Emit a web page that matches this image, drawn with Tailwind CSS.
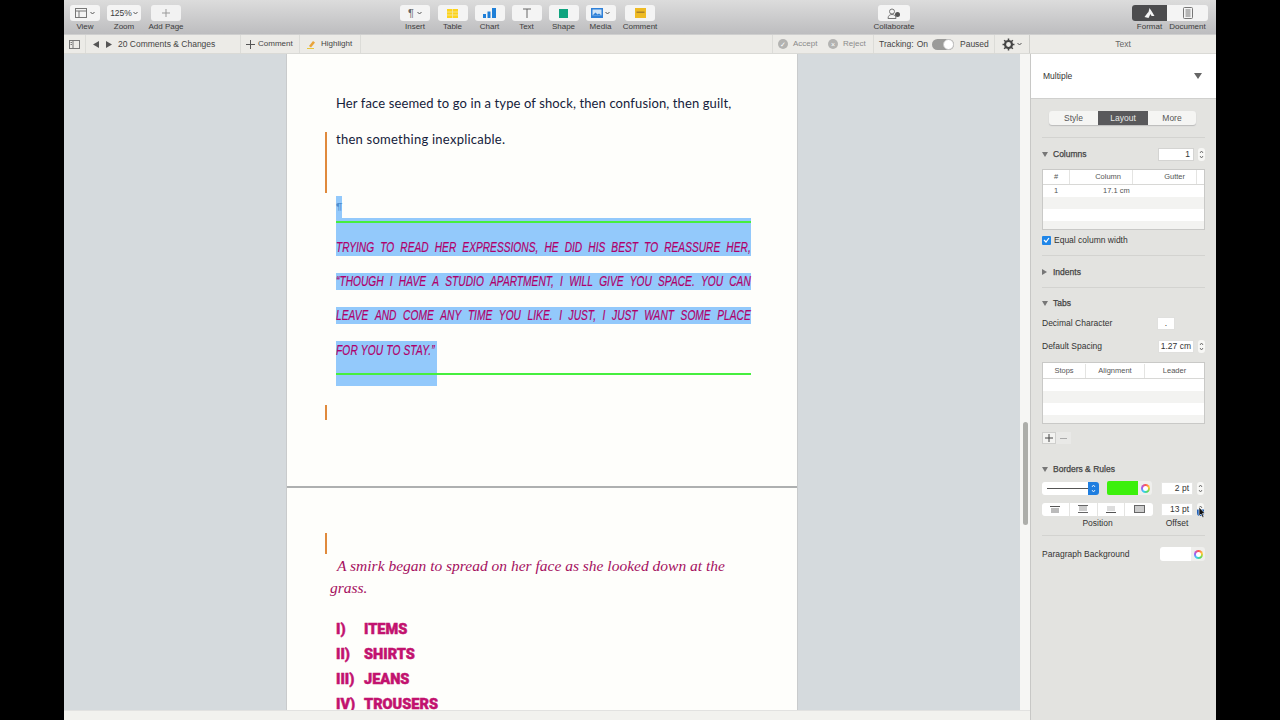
<!DOCTYPE html>
<html lang="en">
<head>
<meta charset="UTF-8">
<title>Pages</title>
<script src="https://cdn.jsdelivr.net/npm/@tailwindcss/browser@4"></script>
</head>
<body class="bg-black overflow-hidden font-['Liberation_Sans',sans-serif]">
<div class="w-[1280px] h-[720px] px-[64px]">
<div class="w-[1152px] h-[720px] flex flex-col bg-[#d5dadd] text-[#3a3a3a] overflow-hidden">

  <!-- top toolbar -->
  <div class="h-[34px] shrink-0 relative bg-gradient-to-b from-[#dcdcdc] to-[#bdbdbf] text-[8px] text-[#3c3c3c]">
    <div class="flex h-full">
      <div class="w-[42px] flex flex-col items-center pt-[5px]">
        <div class="w-[30px] h-[16px] rounded-[3px] bg-[#f4f4f4] flex items-center justify-center gap-[3px]">
          <svg width="12" height="10" viewBox="0 0 12 10" fill="none" stroke="#777"><rect x="0.5" y="0.5" width="11" height="9"/><path d="M0.5 3h11M4 3v6.5"/></svg>
          <svg width="5" height="4" viewBox="0 0 5 4" fill="none" stroke="#555"><path d="M0.5 1l2 2 2-2"/></svg>
        </div>
        <span class="mt-[1px] leading-[10px]">View</span>
      </div>
      <div class="w-[36px] flex flex-col items-center pt-[5px]">
        <div class="w-[34px] h-[16px] rounded-[3px] bg-[#f4f4f4] flex items-center justify-center gap-[1px] text-[8.5px]">125%<svg width="5" height="4" viewBox="0 0 5 4" fill="none" stroke="#555"><path d="M0.5 1l2 2 2-2"/></svg></div>
        <span class="mt-[1px] leading-[10px]">Zoom</span>
      </div>
      <div class="w-[46px] ml-[1px] flex flex-col items-center pt-[5px]">
        <div class="w-[30px] h-[16px] rounded-[3px] bg-[#f2f2f2] flex items-center justify-center text-[#999]">
          <svg width="10" height="10" viewBox="0 0 10 10" stroke="#999"><path d="M5 1v8M1 5h8"/></svg>
        </div>
        <span class="mt-[1px] leading-[10px]">Add Page</span>
      </div>

      <div class="flex ml-[207px]">
        <div class="w-[38px] flex flex-col items-center pt-[5px]">
          <div class="w-[30px] h-[16px] rounded-[3px] bg-[#f4f4f4] flex items-center justify-center gap-[3px] text-[#666] text-[11px] leading-none">¶<svg width="5" height="4" viewBox="0 0 5 4" fill="none" stroke="#555"><path d="M0.5 1l2 2 2-2"/></svg></div>
          <span class="mt-[1px] leading-[10px]">Insert</span>
        </div>
        <div class="w-[37px] flex flex-col items-center pt-[5px]">
          <div class="w-[30px] h-[16px] rounded-[3px] bg-[#f4f4f4] flex items-center justify-center">
            <svg width="11" height="9" viewBox="0 0 11 9"><rect width="11" height="9" fill="#fdd31c"/><path d="M0 3h11M0 6h11M5.5 0v9" stroke="#f3e9a8" stroke-width="0.8"/></svg>
          </div>
          <span class="mt-[1px] leading-[10px]">Table</span>
        </div>
        <div class="w-[37px] flex flex-col items-center pt-[5px]">
          <div class="w-[30px] h-[16px] rounded-[3px] bg-[#f4f4f4] flex items-center justify-center">
            <svg width="13" height="10" viewBox="0 0 13 10" fill="#1e7fd8"><rect y="6" width="3" height="4"/><rect x="4.5" y="3.5" width="3" height="6.5"/><rect x="9" y="0" width="4" height="10"/></svg>
          </div>
          <span class="mt-[1px] leading-[10px]">Chart</span>
        </div>
        <div class="w-[37px] flex flex-col items-center pt-[5px]">
          <div class="w-[30px] h-[16px] rounded-[3px] bg-[#f4f4f4] flex items-center justify-center">
            <svg width="10" height="10" viewBox="0 0 10 10" fill="none" stroke="#666"><path d="M1 1h8M5 1v9"/></svg>
          </div>
          <span class="mt-[1px] leading-[10px]">Text</span>
        </div>
        <div class="w-[37px] flex flex-col items-center pt-[5px]">
          <div class="w-[30px] h-[16px] rounded-[3px] bg-[#f4f4f4] flex items-center justify-center">
            <div class="w-[9px] h-[9px] bg-[#0fa47f]"></div>
          </div>
          <span class="mt-[1px] leading-[10px]">Shape</span>
        </div>
        <div class="w-[37px] flex flex-col items-center pt-[5px]">
          <div class="w-[30px] h-[16px] rounded-[3px] bg-[#f4f4f4] flex items-center justify-center gap-[2px]">
            <svg width="12" height="10" viewBox="0 0 12 10"><rect width="12" height="10" fill="#2f80d8"/><rect x="1.5" y="1.5" width="9" height="6" fill="#cfe3f6"/><path d="M1.5 7.5l3-3 2 2 1.5-1 2.5 2z" fill="#2f80d8"/></svg>
            <svg width="5" height="4" viewBox="0 0 5 4" fill="none" stroke="#555"><path d="M0.5 1l2 2 2-2"/></svg>
          </div>
          <span class="mt-[1px] leading-[10px]">Media</span>
        </div>
        <div class="w-[42px] flex flex-col items-center pt-[5px]">
          <div class="w-[30px] h-[16px] rounded-[3px] bg-[#f4f4f4] flex items-center justify-center">
            <svg width="11" height="10" viewBox="0 0 11 10"><rect width="11" height="10" fill="#eeba24"/><rect x="1.5" y="3.5" width="8" height="1.5" fill="#a8822a"/></svg>
          </div>
          <span class="mt-[1px] leading-[10px]">Comment</span>
        </div>
      </div>

      <div class="ml-[212px] w-[42px] flex flex-col items-center pt-[5px]">
        <div class="w-[32px] h-[16px] rounded-[3px] bg-[#f4f4f4] flex items-center justify-center">
          <svg width="14" height="11" viewBox="0 0 14 11" fill="none" stroke="#777"><circle cx="5" cy="3.5" r="2.5"/><path d="M1 10.5c0-3 2-4 4-4s4 1 4 4z"/><circle cx="10.5" cy="6.5" r="2.5" fill="#555" stroke="none"/></svg>
        </div>
        <span class="mt-[1px] leading-[10px]">Collaborate</span>
      </div>

      <div class="ml-[217px] flex flex-col pt-[5px]">
        <div class="flex w-[76px] h-[16px] rounded-[3px] overflow-hidden bg-[#f4f4f4]">
          <div class="w-[35px] bg-[#4c4c4e] flex items-center justify-center">
            <svg width="11" height="10" viewBox="0 0 11 10" fill="#f4f4f4"><path d="M5.5 0l2 3 3 5h-3l-1-2-2 4-4-1 3-4 1-1z"/></svg>
          </div>
          <div class="flex-1 flex items-center justify-center">
            <svg width="10" height="12" viewBox="0 0 10 12" fill="none" stroke="#777"><rect x="0.5" y="0.5" width="9" height="11" rx="1"/><path d="M2.5 3h5M2.5 5h5M2.5 7h5M2.5 9h5"/></svg>
          </div>
        </div>
        <div class="flex mt-[1px] leading-[10px] w-[76px]">
          <span class="w-[35px] text-center">Format</span>
          <span class="w-[41px] text-center whitespace-nowrap">Document</span>
        </div>
      </div>
    </div>
  </div>

  <!-- second bar -->
  <div class="h-[20px] shrink-0 flex items-center bg-[#ecebe7] text-[8px] text-[#444] border-t border-[#cfcfcf] border-b border-b-[#dadad6]">
    <div class="w-[966px] shrink-0 h-full flex items-center border-r border-[#cfcfcb]">
      <div class="w-[22px] h-full flex items-center justify-center border-r border-[#dcdcd8]">
        <svg width="11" height="9" viewBox="0 0 11 9" fill="none" stroke="#777"><rect x="0.5" y="0.5" width="10" height="8"/><path d="M4 0.5v8M1.5 2.5h1.5M1.5 4.5h1.5"/></svg>
      </div>
      <svg class="ml-[7px]" width="6" height="7" viewBox="0 0 6 7" fill="#555"><path d="M6 0v7L0 3.5z"/></svg>
      <svg class="ml-[7px]" width="6" height="7" viewBox="0 0 6 7" fill="#555"><path d="M0 0v7l6-3.5z"/></svg>
      <span class="ml-[6px] w-[122px] text-[8.5px] whitespace-nowrap">20 Comments &amp; Changes</span>
      <div class="h-full flex items-center w-[60px] border-l border-r border-[#dcdcd8] pl-[5px] gap-[3px]">
        <svg width="9" height="9" viewBox="0 0 9 9" stroke="#555"><path d="M4.5 0v9M0 4.5h9"/></svg>
        <span>Comment</span>
      </div>
      <div class="h-full flex items-center w-[61px] border-r border-[#dcdcd8] pl-[7px] gap-[5px]">
        <svg width="9" height="9" viewBox="0 0 9 9"><path d="M2 6l4-5 2 1.5-4 5z" fill="#e8a33a"/><path d="M0 8.5h7" stroke="#e8c63a"/></svg>
        <span>Highlight</span>
      </div>
      <div class="ml-[411px] h-full w-[1px] bg-[#dcdcd8]"></div>
      <div class="ml-[5px] w-[10px] h-[10px] rounded-full bg-[#b3b3b1] flex items-center justify-center text-white text-[7px] leading-none">✓</div>
      <span class="ml-[5px] w-[25px] text-[#8a8a8a]">Accept</span>
      <div class="ml-[10px] w-[10px] h-[10px] rounded-full bg-[#b3b3b1] flex items-center justify-center text-white text-[7px] leading-none">×</div>
      <span class="ml-[5px] w-[22px] text-[#8a8a8a]">Reject</span>
      <div class="ml-[8px] h-full w-[1px] bg-[#dcdcd8]"></div>
      <span class="ml-[5px] text-[8.5px]">Tracking:</span>
      <span class="ml-[3px] text-[8.5px]">On</span>
      <div class="ml-[4px] w-[22px] h-[11px] rounded-full bg-[#9b9b99] flex justify-end items-center">
        <div class="w-[11px] h-[11px] rounded-full bg-white border border-[#c5c5c5]"></div>
      </div>
      <span class="ml-[6px] text-[8.5px]">Paused</span>
      <div class="ml-[5px] h-full w-[1px] bg-[#dcdcd8]"></div>
      <svg class="ml-[7px]" width="13" height="13" viewBox="0 0 12 12" fill="none" stroke="#444" stroke-width="2"><circle cx="6" cy="6" r="3.2"/><path d="M6 0.5v2M6 9.5v2M0.5 6h2M9.5 6h2M2 2l1.5 1.5M8.5 8.5L10 10M2 10l1.5-1.5M8.5 3.5L10 2" stroke-width="1.4"/></svg>
      <svg class="ml-[2px]" width="5" height="4" viewBox="0 0 5 4" fill="none" stroke="#555"><path d="M0.5 1l2 2 2-2"/></svg>
    </div>
    <span class="flex-1 text-center text-[8.5px] text-[#666]">Text</span>
  </div>

  <div class="flex flex-1 min-h-0">
    <!-- document canvas -->
    <div class="w-[966px] shrink-0 relative overflow-hidden">
      <div class="w-[512px] h-full ml-[222px] bg-[#fefefb] border-x border-[#c9cbcc] relative font-['Lato',sans-serif]">
        <!-- first page -->
        <div class="h-[434px] border-b-2 border-[#aeb0b0] pl-[49px] relative">
          <p class="pt-[31px] text-[13px] leading-[36px] text-[#15213a] tracking-[0.12px] whitespace-nowrap">Her face seemed to go in a type of shock, then confusion, then guilt,</p>
          <p class="text-[13px] leading-[36px] text-[#15213a] tracking-[0.25px] whitespace-nowrap">then something inexplicable.</p>

          <div class="absolute left-[38px] top-[78px] w-[2px] h-[61px] bg-[#e08a3c]"></div>
          <div class="absolute left-[38px] top-[351px] w-[2px] h-[15px] bg-[#e08a3c]"></div>

          <div class="absolute left-[49px] top-[142px] w-[415px]">
            <div class="w-[6px] h-[22px] bg-[#93c9fb] text-[#4d8fd0] text-[9px] leading-[22px]">¶</div>
            <!-- display face squeezed sideways: no condensed family is installed -->
            <div class="font-['Liberation_Sans',sans-serif] italic text-[#b0006b] text-[15px] whitespace-nowrap [-webkit-text-stroke:0.2px_#b0006b]">
              <div class="h-[38px] pt-[21px] leading-[15px] bg-[#93c9fb]"><div class="w-[610px] origin-left scale-x-[0.68] flex justify-between"><span>TRYING</span><span>TO</span><span>READ</span><span>HER</span><span>EXPRESSIONS,</span><span>HE</span><span>DID</span><span>HIS</span><span>BEST</span><span>TO</span><span>REASSURE</span><span>HER,</span></div></div>
              <div class="h-[17px] mt-[17px] leading-[15px] bg-[#93c9fb]"><div class="w-[610px] origin-left scale-x-[0.68] flex justify-between"><span>“THOUGH</span><span>I</span><span>HAVE</span><span>A</span><span>STUDIO</span><span>APARTMENT,</span><span>I</span><span>WILL</span><span>GIVE</span><span>YOU</span><span>SPACE.</span><span>YOU</span><span>CAN</span></div></div>
              <div class="h-[17px] mt-[17px] leading-[15px] bg-[#93c9fb]"><div class="w-[610px] origin-left scale-x-[0.68] flex justify-between"><span>LEAVE</span><span>AND</span><span>COME</span><span>ANY</span><span>TIME</span><span>YOU</span><span>LIKE.</span><span>I</span><span>JUST,</span><span>I</span><span>JUST</span><span>WANT</span><span>SOME</span><span>PLACE</span></div></div>
              <div class="mt-[17px] pt-[1px] leading-[15px] h-[45px] w-[101px] bg-[#93c9fb]"><div class="w-[150px] origin-left scale-x-[0.68] tracking-[0.2px]">FOR YOU TO STAY.”</div></div>
            </div>
            <div class="absolute left-0 right-0 top-[25px] h-[2px] bg-[#46ef3e]"></div>
            <div class="absolute left-0 right-0 top-[177px] h-[2px] bg-[#46ef3e]"></div>
          </div>
        </div>

        <!-- second page -->
        <div class="pl-[43px] relative">
          <div class="absolute left-[38px] top-[45px] w-[2px] h-[21px] bg-[#e08a3c]"></div>
          <p class="pt-[67px] pl-[7px] font-['Liberation_Serif',serif] italic text-[15.5px] leading-[22px] text-[#a5105f] whitespace-nowrap">A smirk began to spread on her face as she looked down at the</p>
          <p class="font-['Liberation_Serif',serif] italic text-[15.5px] leading-[22px] text-[#a5105f]">grass.</p>
          <div class="mt-[18px] pl-[6px] font-['Roboto',sans-serif] font-black text-[14.5px] leading-[25px] text-[#c2126f] [-webkit-text-stroke:0.5px_#c2126f]">
            <div class="flex"><span class="w-[28px]">I)</span><span>ITEMS</span></div>
            <div class="flex"><span class="w-[28px]">II)</span><span>SHIRTS</span></div>
            <div class="flex"><span class="w-[28px]">III)</span><span>JEANS</span></div>
            <div class="flex"><span class="w-[28px]">IV)</span><span>TROUSERS</span></div>
          </div>
        </div>
      </div>

      <!-- scrollbar -->
      <div class="absolute right-0 top-0 bottom-0 w-[10px] bg-[#f6f6f4]"></div>
      <div class="absolute right-[2px] top-[368px] w-[5px] h-[103px] rounded-full bg-[#adaeaa]"></div>
      <!-- bottom scroll track -->
      <div class="absolute left-0 right-0 bottom-0 h-[10px] bg-[#f2f2ee] border-t border-[#e2e2e0]"></div>
    </div>

    <!-- sidebar -->
    <div class="w-[186px] min-w-0 bg-[#e3e3e0] border-l border-[#c8c8c6] text-[8.5px] text-[#333]">
      <div class="h-[45px] bg-white border-b border-[#d0d0ce] flex items-center justify-between pl-[12px] pr-[14px]">
        <span>Multiple</span>
        <svg width="8" height="6" viewBox="0 0 8 6" fill="#666"><path d="M0 0h8L4 6z"/></svg>
      </div>

      <div class="pl-[11px] w-[174px]">
        <div class="mt-[12px] pl-[7px]">
          <div class="flex h-[14px] w-[147px] rounded-[3px] bg-[#f5f5f3] shadow-[0_1px_1px_#bbb] leading-[14px] text-center text-[#555] overflow-hidden">
            <span class="w-[49px]">Style</span>
            <span class="w-[50px] bg-[#59595b] text-[#e8e8e8]">Layout</span>
            <span class="flex-1">More</span>
          </div>
        </div>
        <div class="mt-[12px] border-t border-[#d3d3d0]"></div>

        <div class="flex items-center h-[26px] mt-[3px]">
          <svg width="6" height="5" viewBox="0 0 6 5" fill="#777"><path d="M0 0h6L3 5z"/></svg>
          <span class="ml-[5px] text-[#444] [-webkit-text-stroke:0.25px_#444]">Columns</span>
          <div class="ml-auto w-[36px] h-[13px] bg-white border border-[#d4d4d2] text-right pr-[3px] leading-[11px]">1</div>
          <svg class="ml-[4px]" width="7" height="13" viewBox="0 0 7 13"><rect width="7" height="13" rx="3" fill="#f7f7f5"/><path d="M2 5l1.5-2L5 5M2 8l1.5 2L5 8" fill="none" stroke="#555" stroke-width="0.8"/></svg>
        </div>

        <div class="h-[61px] mt-[2px] border border-[#c9c9c7] bg-white text-[#555] text-[7.5px]">
          <div class="h-[15px] grid grid-cols-[26px_64px_64px_1fr] items-center border-b border-[#d8d8d6] text-center leading-[14px]">
            <span>#</span><span class="border-x border-[#e4e4e2] text-right pr-[11px]">Column</span><span class="border-r border-[#e4e4e2] text-right pr-[11px]">Gutter</span><span></span>
          </div>
          <div class="h-[12px] flex items-center pl-[11px] leading-[12px]"><span class="w-[49px]">1</span><span>17.1 cm</span></div>
          <div class="h-[12px] bg-[#f3f3f1]"></div>
          <div class="h-[12px]"></div>
          <div class="h-[8px] bg-[#f3f3f1]"></div>
        </div>

        <div class="flex items-center mt-[4px] h-[12px]">
          <div class="w-[9px] h-[9px] rounded-[1px] bg-[#1f86e8] flex items-center justify-center">
            <svg width="7" height="6" viewBox="0 0 7 6" fill="none" stroke="#fff" stroke-width="1.2"><path d="M1 3l2 2 3-4"/></svg>
          </div>
          <span class="ml-[3px]">Equal column width</span>
        </div>
        <div class="mt-[9px] border-t border-[#d3d3d0]"></div>

        <div class="flex items-center h-[30px] mt-[1px]">
          <svg width="5" height="6" viewBox="0 0 5 6" fill="#777"><path d="M0 0v6l5-3z"/></svg>
          <span class="ml-[6px] text-[#444] [-webkit-text-stroke:0.25px_#444]">Indents</span>
        </div>
        <div class="border-t border-[#d3d3d0]"></div>

        <div class="flex items-center h-[18px] mt-[6px]">
          <svg width="6" height="5" viewBox="0 0 6 5" fill="#777"><path d="M0 0h6L3 5z"/></svg>
          <span class="ml-[5px] text-[#444] [-webkit-text-stroke:0.25px_#444]">Tabs</span>
        </div>
        <div class="flex items-center h-[13px] mt-[5px]">
          <span class="w-[115px]">Decimal Character</span>
          <div class="w-[18px] h-[13px] bg-white border border-[#e0e0de] text-center leading-[11px]">.</div>
        </div>
        <div class="flex items-center h-[13px] mt-[10px]">
          <span>Default Spacing</span>
          <div class="ml-auto w-[36px] h-[13px] bg-white border border-[#e0e0de] text-right pr-[2px] leading-[11px]">1.27 cm</div>
          <svg class="ml-[4px]" width="7" height="13" viewBox="0 0 7 13"><rect width="7" height="13" rx="3" fill="#f7f7f5"/><path d="M2 5l1.5-2L5 5M2 8l1.5 2L5 8" fill="none" stroke="#555" stroke-width="0.8"/></svg>
        </div>

        <div class="h-[62px] mt-[9px] border border-[#c9c9c7] bg-white text-[#555] text-[7.5px]">
          <div class="h-[16px] grid grid-cols-[42px_60px_1fr] items-center border-b border-[#d8d8d6] text-center leading-[14px]">
            <span>Stops</span><span class="border-x border-[#e4e4e2]">Alignment</span><span>Leader</span>
          </div>
          <div class="h-[12px]"></div>
          <div class="h-[12px] bg-[#f3f3f1]"></div>
          <div class="h-[12px]"></div>
          <div class="h-[8px] bg-[#f3f3f1]"></div>
        </div>

        <div class="flex mt-[8px] h-[12px]">
          <div class="w-[14px] h-[12px] bg-[#f3f3f1] border border-[#cfcfcd] flex items-center justify-center">
            <svg width="8" height="8" viewBox="0 0 8 8" stroke="#444"><path d="M4 0v8M0 4h8"/></svg>
          </div>
          <div class="w-[15px] h-[12px] bg-[#e9e9e7] flex items-center justify-center">
            <svg width="7" height="1" viewBox="0 0 7 1" stroke="#aaa"><path d="M0 .5h7"/></svg>
          </div>
        </div>

        <div class="flex items-center h-[14px] mt-[18px]">
          <svg width="6" height="5" viewBox="0 0 6 5" fill="#777"><path d="M0 0h6L3 5z"/></svg>
          <span class="ml-[5px] text-[#444] [-webkit-text-stroke:0.25px_#444]">Borders &amp; Rules</span>
        </div>

        <div class="flex items-center h-[14px] mt-[5px]">
          <div class="w-[46px] h-[13px] bg-white rounded-l-[3px] flex items-center pl-[5px]"><div class="w-[41px] h-[1px] bg-[#555]"></div></div>
          <div class="w-[11px] h-[13px] bg-[#1f7ee0] rounded-r-[3px] flex items-center justify-center">
            <svg width="5" height="9" viewBox="0 0 5 9" fill="none" stroke="#fff" stroke-width="0.8"><path d="M1 3l1.5-2L4 3M1 6l1.5 2L4 6"/></svg>
          </div>
          <div class="ml-[8px] w-[31px] h-[14px] bg-[#3cf00c] rounded-l-[2px]"></div>
          <div class="w-[14px] h-[14px] bg-[#efefed] rounded-r-[3px] flex items-center justify-center">
            <div class="w-[9px] h-[9px] rounded-full bg-[conic-gradient(#f55,#fc3,#5d5,#3cf,#a5e,#f55)] flex items-center justify-center"><div class="w-[5px] h-[5px] rounded-full bg-white"></div></div>
          </div>
          <div class="ml-[9px] w-[32px] h-[13px] bg-white border border-[#e6e6e4] text-right pr-[3px] leading-[11px]">2 pt</div>
          <svg class="ml-[4px]" width="7" height="13" viewBox="0 0 7 13"><rect width="7" height="13" rx="3" fill="#f7f7f5"/><path d="M2 5l1.5-2L5 5M2 8l1.5 2L5 8" fill="none" stroke="#555" stroke-width="0.8"/></svg>
        </div>

        <div class="flex items-center h-[14px] mt-[7px]">
          <div class="w-[111px] h-[13px] bg-white rounded-[3px] grid grid-cols-4 divide-x divide-[#e4e4e2]">
            <div class="flex items-center justify-center"><svg width="10" height="7" viewBox="0 0 10 7"><rect x="1" y="2" width="8" height="5" fill="#bbb"/><path d="M0 .5h10" stroke="#555"/></svg></div>
            <div class="flex items-center justify-center"><svg width="10" height="8" viewBox="0 0 10 8"><rect x="1" y="1" width="8" height="5" fill="#ccc"/><path d="M0 .5h10M0 7.5h10" stroke="#666"/></svg></div>
            <div class="flex items-center justify-center"><svg width="10" height="7" viewBox="0 0 10 7"><rect x="1" y="0" width="8" height="5" fill="#ddd"/><path d="M0 6.5h10" stroke="#555"/></svg></div>
            <div class="flex items-center justify-center"><svg width="11" height="8" viewBox="0 0 11 8"><rect x=".5" y=".5" width="10" height="7" fill="#ccc" stroke="#666"/></svg></div>
          </div>
          <div class="ml-[8px] w-[32px] h-[13px] bg-white border border-[#e6e6e4] text-right pr-[3px] leading-[11px]">13 pt</div>
          <div class="relative ml-[4px]">
            <svg width="7" height="13" viewBox="0 0 7 13"><rect width="7" height="13" rx="3" fill="#f7f7f5"/><path d="M0 6.5h7v3.5a3 3 0 0 1-7 0z" fill="#1d5fb8"/><path d="M2 5l1.5-2L5 5" fill="none" stroke="#555" stroke-width="0.8"/></svg>
            <svg class="absolute left-[1px] top-[4px]" width="8" height="11" viewBox="0 0 8 11"><path d="M1 0v9l2-2 1.5 3.5 1.5-.6L4.5 6.5H7z" fill="#111" stroke="#fff" stroke-width="0.6"/></svg>
          </div>
        </div>
        <div class="flex text-center h-[13px] leading-[13px] mt-[1px]">
          <span class="w-[111px]">Position</span>
          <span class="ml-[8px] w-[32px]">Offset</span>
        </div>
        <div class="mt-[5px] border-t border-[#d3d3d0]"></div>

        <div class="flex items-center h-[14px] mt-[11px]">
          <span>Paragraph Background</span>
          <div class="ml-auto w-[31px] h-[14px] bg-white rounded-l-[3px]"></div>
          <div class="w-[14px] h-[14px] bg-[#efefed] rounded-r-[3px] flex items-center justify-center">
            <div class="w-[9px] h-[9px] rounded-full bg-[conic-gradient(#f55,#fc3,#5d5,#3cf,#a5e,#f55)] flex items-center justify-center"><div class="w-[5px] h-[5px] rounded-full bg-white"></div></div>
          </div>
        </div>
      </div>
    </div>
  </div>
</div>
</div>
</body>
</html>
